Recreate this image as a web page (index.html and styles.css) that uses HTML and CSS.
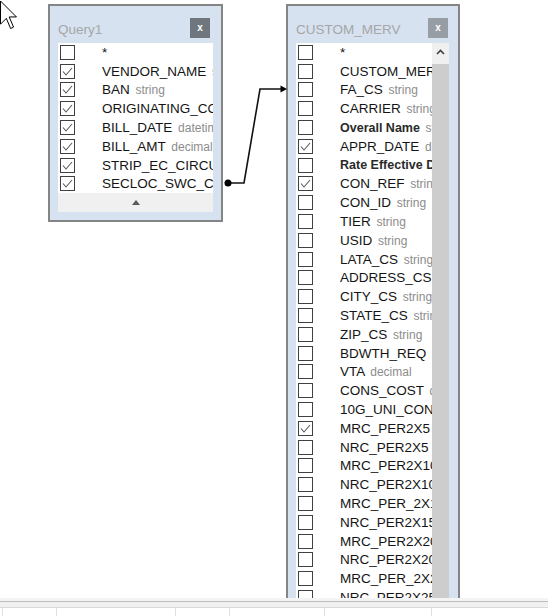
FILE: index.html
```html
<!DOCTYPE html>
<html>
<head>
<meta charset="utf-8">
<link rel="stylesheet" href="styles.css">
</head>
<body>
<div class="canvas">
  <svg class="cursor" width="24" height="32" viewBox="0 0 24 32"><polygon points="0.5,1 0.5,24.2 6.3,18.4 10.65,28.55 13.55,27.1 9.2,16.95 16.45,16.95" fill="#fff" stroke="#000" stroke-width="1"/></svg>

  <div class="win win-q">
    <div class="title"><span class="title-text">Query1</span><span class="close">x</span></div>
    <div class="list">
      <div class="row"><span class="cb"></span><span class="name">*</span></div>
      <div class="row"><span class="cb"><svg viewBox="0 0 13 13"><polyline points="2,6.5 5,10 11,3" fill="none" stroke="#5a5a5a" stroke-width="1.1"/></svg></span><span class="name">VENDOR_NAME <span class="type">string</span></span></div>
      <div class="row"><span class="cb"><svg viewBox="0 0 13 13"><polyline points="2,6.5 5,10 11,3" fill="none" stroke="#5a5a5a" stroke-width="1.1"/></svg></span><span class="name">BAN <span class="type">string</span></span></div>
      <div class="row"><span class="cb"><svg viewBox="0 0 13 13"><polyline points="2,6.5 5,10 11,3" fill="none" stroke="#5a5a5a" stroke-width="1.1"/></svg></span><span class="name">ORIGINATING_COUNTRY <span class="type">string</span></span></div>
      <div class="row"><span class="cb"><svg viewBox="0 0 13 13"><polyline points="2,6.5 5,10 11,3" fill="none" stroke="#5a5a5a" stroke-width="1.1"/></svg></span><span class="name">BILL_DATE <span class="type">datetime</span></span></div>
      <div class="row"><span class="cb"><svg viewBox="0 0 13 13"><polyline points="2,6.5 5,10 11,3" fill="none" stroke="#5a5a5a" stroke-width="1.1"/></svg></span><span class="name">BILL_AMT <span class="type">decimal</span></span></div>
      <div class="row"><span class="cb"><svg viewBox="0 0 13 13"><polyline points="2,6.5 5,10 11,3" fill="none" stroke="#5a5a5a" stroke-width="1.1"/></svg></span><span class="name">STRIP_EC_CIRCUIT <span class="type">string</span></span></div>
      <div class="row"><span class="cb"><svg viewBox="0 0 13 13"><polyline points="2,6.5 5,10 11,3" fill="none" stroke="#5a5a5a" stroke-width="1.1"/></svg></span><span class="name">SECLOC_SWC_CODE <span class="type">string</span></span></div>
    </div>
    <div class="foot"><span class="tri"></span></div>
  </div>

  <div class="win win-c">
    <div class="title"><span class="title-text">CUSTOM_MERV</span><span class="close">x</span></div>
    <div class="body-c">
      <div class="list">
        <div class="row"><span class="cb"></span><span class="name">*</span></div>
        <div class="row"><span class="cb"></span><span class="name">CUSTOM_MERV_ID <span class="type">int</span></span></div>
        <div class="row"><span class="cb"></span><span class="name">FA_CS <span class="type">string</span></span></div>
        <div class="row"><span class="cb"></span><span class="name">CARRIER <span class="type">string</span></span></div>
        <div class="row"><span class="cb"></span><span class="name bold">Overall Name <span class="type">string</span></span></div>
        <div class="row"><span class="cb"><svg viewBox="0 0 13 13"><polyline points="2,6.5 5,10 11,3" fill="none" stroke="#5a5a5a" stroke-width="1.1"/></svg></span><span class="name">APPR_DATE <span class="type">datetime</span></span></div>
        <div class="row"><span class="cb"></span><span class="name bold">Rate Effective Date <span class="type">datetime</span></span></div>
        <div class="row"><span class="cb"><svg viewBox="0 0 13 13"><polyline points="2,6.5 5,10 11,3" fill="none" stroke="#5a5a5a" stroke-width="1.1"/></svg></span><span class="name">CON_REF <span class="type">string</span></span></div>
        <div class="row"><span class="cb"></span><span class="name">CON_ID <span class="type">string</span></span></div>
        <div class="row"><span class="cb"></span><span class="name">TIER <span class="type">string</span></span></div>
        <div class="row"><span class="cb"></span><span class="name">USID <span class="type">string</span></span></div>
        <div class="row"><span class="cb"></span><span class="name">LATA_CS <span class="type">string</span></span></div>
        <div class="row"><span class="cb"></span><span class="name">ADDRESS_CS <span class="type">string</span></span></div>
        <div class="row"><span class="cb"></span><span class="name">CITY_CS <span class="type">string</span></span></div>
        <div class="row"><span class="cb"></span><span class="name">STATE_CS <span class="type">string</span></span></div>
        <div class="row"><span class="cb"></span><span class="name">ZIP_CS <span class="type">string</span></span></div>
        <div class="row"><span class="cb"></span><span class="name">BDWTH_REQ <span class="type">string</span></span></div>
        <div class="row"><span class="cb"></span><span class="name">VTA <span class="type">decimal</span></span></div>
        <div class="row"><span class="cb"></span><span class="name">CONS_COST <span class="type">decimal</span></span></div>
        <div class="row"><span class="cb"></span><span class="name">10G_UNI_CONS <span class="type">decimal</span></span></div>
        <div class="row"><span class="cb"><svg viewBox="0 0 13 13"><polyline points="2,6.5 5,10 11,3" fill="none" stroke="#5a5a5a" stroke-width="1.1"/></svg></span><span class="name">MRC_PER2X5 <span class="type">decimal</span></span></div>
        <div class="row"><span class="cb"></span><span class="name">NRC_PER2X5 <span class="type">decimal</span></span></div>
        <div class="row"><span class="cb"></span><span class="name">MRC_PER2X10 <span class="type">decimal</span></span></div>
        <div class="row"><span class="cb"></span><span class="name">NRC_PER2X10 <span class="type">decimal</span></span></div>
        <div class="row"><span class="cb"></span><span class="name">MRC_PER_2X15 <span class="type">decimal</span></span></div>
        <div class="row"><span class="cb"></span><span class="name">NRC_PER2X15 <span class="type">decimal</span></span></div>
        <div class="row"><span class="cb"></span><span class="name">MRC_PER2X20 <span class="type">decimal</span></span></div>
        <div class="row"><span class="cb"></span><span class="name">NRC_PER2X20 <span class="type">decimal</span></span></div>
        <div class="row"><span class="cb"></span><span class="name">MRC_PER_2X25 <span class="type">decimal</span></span></div>
        <div class="row"><span class="cb"></span><span class="name">NRC_PER2X25 <span class="type">decimal</span></span></div>
        <div class="row"><span class="cb"></span><span class="name">MRC_PER2X30 <span class="type">decimal</span></span></div>
      </div>
      <div class="vscroll">
        <div class="vbtn"><svg width="9" height="6" viewBox="0 0 9 6"><polyline points="1,5 4.5,1.5 8,5" fill="none" stroke="#404040" stroke-width="1.6"/></svg></div>
        <div class="thumb"></div>
      </div>
    </div>
  </div>

  <svg class="link" width="548" height="598" viewBox="0 0 548 598">
    <path d="M228 183 H244 L260 89 H282" fill="none" stroke="#111" stroke-width="1.6"/>
    <circle cx="228" cy="183" r="3.5" fill="#000"/>
    <polygon points="280.5,85.5 287,89 280.5,92.5" fill="#000"/>
  </svg>
</div>
<div class="bottom">
  <div class="sep"></div>
  <div class="gap"></div>
  <div class="cols">
    <span class="cell c1"></span><span class="cell c2"></span><span class="cell c3"></span><span class="cell c4"></span><span class="cell c5"></span><span class="cell c6"></span><span class="cell c7"></span>
  </div>
</div>
</body>
</html>
```

FILE: styles.css
```css
html, body {
  margin: 0;
  padding: 0;
}
body {
  width: 548px;
  height: 616px;
  overflow: hidden;
  background: #fff;
  font-family: "Liberation Sans", Arial, sans-serif;
}
.canvas {
  position: relative;
  height: 598px;
  overflow: hidden;
  background: #fff;
}
.cursor {
  position: absolute;
  left: 0;
  top: 0;
  z-index: 5;
}
.win {
  position: absolute;
  box-sizing: border-box;
  border: 2px solid #858585;
  background: #d6e2f0;
  display: flex;
  flex-direction: column;
}
.win-q {
  left: 48px;
  top: 4px;
  width: 175px;
  height: 218px;
}
.win-c {
  left: 286px;
  top: 4px;
  width: 174px;
  height: 720px;
}
.title {
  flex: none;
  height: 37px;
  box-sizing: border-box;
  display: flex;
  align-items: flex-start;
  justify-content: space-between;
  padding: 12px 11px 0 8px;
}
.win-c .title {
  padding-right: 10px;
}
.title-text {
  font-size: 13.5px;
  line-height: 20px;
  color: #a6a6a6;
  margin-top: 2px;
}
.close {
  width: 20px;
  height: 20px;
  background: #6f767e;
  color: #fff;
  font-weight: bold;
  font-size: 10px;
  line-height: 19px;
  text-align: center;
}
.win-c .close {
  background: #979da4;
}
.list {
  background: #fff;
  overflow: hidden;
  margin-left: 8px;
}
.win-q .list {
  width: 155px;
  height: 150.4px;
  flex: none;
}
.foot {
  flex: none;
  width: 155px;
  height: 19px;
  margin-left: 8px;
  background: #f0f0f0;
  display: flex;
  justify-content: center;
  align-items: center;
}
.tri {
  width: 0;
  height: 0;
  border-left: 4.5px solid transparent;
  border-right: 4.5px solid transparent;
  border-bottom: 5px solid #5a5a5a;
}
.body-c {
  flex: 1;
  display: flex;
  margin-left: 8px;
}
.win-c .list {
  width: 136px;
  margin-left: 0;
}
.row {
  display: flex;
  align-items: center;
  height: 18.8px;
  padding-left: 2px;
  white-space: nowrap;
}
.cb {
  flex: none;
  width: 15px;
  height: 15px;
  box-sizing: border-box;
  border: 1px solid #404040;
  background: #fff;
  display: flex;
}
.cb svg {
  width: 13px;
  height: 13px;
}
.name {
  margin-left: 27px;
  font-size: 13.5px;
  color: #141414;
}
.name.bold {
  font-weight: bold;
  font-size: 12.5px;
  color: #2a2a2a;
}
.type {
  font-size: 12px;
  font-weight: normal;
  color: #8c8c8c;
  margin-left: 2px;
}
.vscroll {
  width: 17px;
  flex: none;
  display: flex;
  flex-direction: column;
  background: #f0f0f0;
}
.vbtn {
  height: 17px;
  display: flex;
  align-items: center;
  justify-content: center;
}
.thumb {
  flex: 1;
  margin-top: 4px;
  background: #cdcdcd;
}
.link {
  position: absolute;
  left: 0;
  top: 0;
  z-index: 3;
}
.bottom {
  height: 18px;
  display: flex;
  flex-direction: column;
  background: #f0f0f0;
}
.bottom .sep {
  height: 3px;
  background: #f4f4f4;
  border-bottom: 1px solid #bdbdbd;
}
.bottom .gap {
  height: 5px;
  background: #f0f0f0;
  border-bottom: 1px solid #d9d9d9;
}
.bottom .cols {
  flex: 1;
  display: grid;
  grid-template-columns: 3px 54px 119px 54px 95px 107px 1fr;
  background: #fff;
}
.cell {
  border-right: 1px solid #e0e0e0;
}
.cell.c7 {
  border-right: none;
}
```
